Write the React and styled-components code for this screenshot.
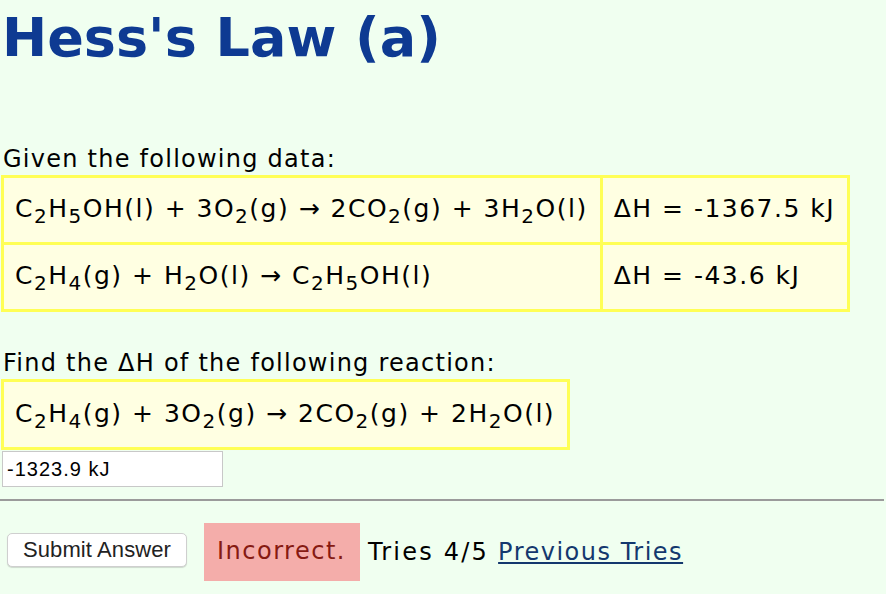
import React from "react";
import styled, { createGlobalStyle } from "styled-components";

const GlobalStyle = createGlobalStyle`
  html, body {
    margin: 0;
    padding: 0;
    background: #f0fff0;
  }
  body {
    font-family: "DejaVu Sans", Verdana, sans-serif;
    color: #000;
  }
`;

const Page = styled.div`
  padding: 0 2px;
`;

const Title = styled.h1`
  margin: 6px 0 0 0;
  font-size: 54px;
  line-height: 64px;
  font-weight: bold;
  color: #0e3a92;
`;

const Prompt = styled.p`
  margin: ${(p) => p.$top}px 0 2px 1px;
  font-size: 24px;
  line-height: 28px;
  letter-spacing: 1.25px;
`;

const ReactionTable = styled.table`
  border-collapse: collapse;
  margin-left: -1px;
  font-size: 25px;
  letter-spacing: 1.5px;
`;

const Cell = styled.td`
  border: 3px solid #ffff55;
  background: #ffffe2;
  padding: ${(p) => (p.$tight ? "18px 12px 19px 11px" : "17px 12px 19px 11px")};
  white-space: nowrap;
  line-height: 28px;

  sub {
    font-size: 0.8em;
    vertical-align: -0.32em;
    line-height: 0;
  }
`;

const AnswerInput = styled.input`
  display: block;
  margin: 1px 0 0 0;
  width: 221px;
  height: 36px;
  box-sizing: border-box;
  border: 1px solid #c8c8c8;
  background: #fff;
  padding: 2px 4px;
  font-family: "Liberation Sans", Arial, sans-serif;
  font-size: 20px;
  letter-spacing: 1px;
  color: #000;
`;

const Rule = styled.hr`
  margin: 12px 0 0 -2px;
  border: none;
  border-top: 2px solid #9b9b9b;
`;

const SubmitRow = styled.div`
  display: flex;
  align-items: center;
  margin-top: 20px;
  font-size: 24px;
  letter-spacing: 1.5px;
`;

const SubmitButton = styled.button`
  margin: -2px 0 0 5px;
  width: 180px;
  height: 34px;
  border: 1px solid #cfcfcf;
  border-radius: 5px;
  background: #fff;
  box-shadow: 0 1px 1px rgba(0, 0, 0, 0.15);
  font-family: "Liberation Sans", Arial, sans-serif;
  font-size: 22px;
  letter-spacing: 0.1px;
  color: #222;
`;

const Verdict = styled.span`
  margin: 2px 0 0 17px;
  padding: 14px 14px 15px 13px;
  background: #f4adaa;
  color: #861a12;
  line-height: 29px;
`;

const Tries = styled.span`
  margin: 2px 0 0 8px;
  letter-spacing: 2.2px;
`;

const TriesLink = styled.a`
  margin-top: 2px;
  color: #14386e;
  text-decoration: underline;
`;

const Formula = ({ parts }) => (
  <>
    {parts.map((p, i) =>
      typeof p === "number" ? <sub key={i}>{p}</sub> : <span key={i}>{p}</span>
    )}
  </>
);

const data = [
  {
    eq: ["C", 2, "H", 5, "OH(l) + 3O", 2, "(g) → 2CO", 2, "(g) + 3H", 2, "O(l)"],
    dh: "ΔH = -1367.5 kJ",
  },
  {
    eq: ["C", 2, "H", 4, "(g) + H", 2, "O(l) → C", 2, "H", 5, "OH(l)"],
    dh: "ΔH = -43.6 kJ",
  },
];

const target = ["C", 2, "H", 4, "(g) + 3O", 2, "(g) → 2CO", 2, "(g) + 2H", 2, "O(l)"];

export default function App() {
  return (
    <>
      <GlobalStyle />
      <Page>
        <Title>Hess's Law (a)</Title>
        <Prompt $top={75}>Given the following data:</Prompt>
        <ReactionTable>
          <tbody>
            {data.map((row, i) => (
              <tr key={i}>
                <Cell>
                  <Formula parts={row.eq} />
                </Cell>
                <Cell>{row.dh}</Cell>
              </tr>
            ))}
          </tbody>
        </ReactionTable>
        <Prompt $top={37}>Find the ΔH of the following reaction:</Prompt>
        <ReactionTable>
          <tbody>
            <tr>
              <Cell $tight>
                <Formula parts={target} />
              </Cell>
            </tr>
          </tbody>
        </ReactionTable>
        <AnswerInput defaultValue="-1323.9 kJ" />
        <Rule />
        <SubmitRow>
          <SubmitButton>Submit Answer</SubmitButton>
          <Verdict>Incorrect.</Verdict>
          <Tries>Tries 4/5</Tries>
          &nbsp;
          <TriesLink href="#">Previous Tries</TriesLink>
        </SubmitRow>
      </Page>
    </>
  );
}
